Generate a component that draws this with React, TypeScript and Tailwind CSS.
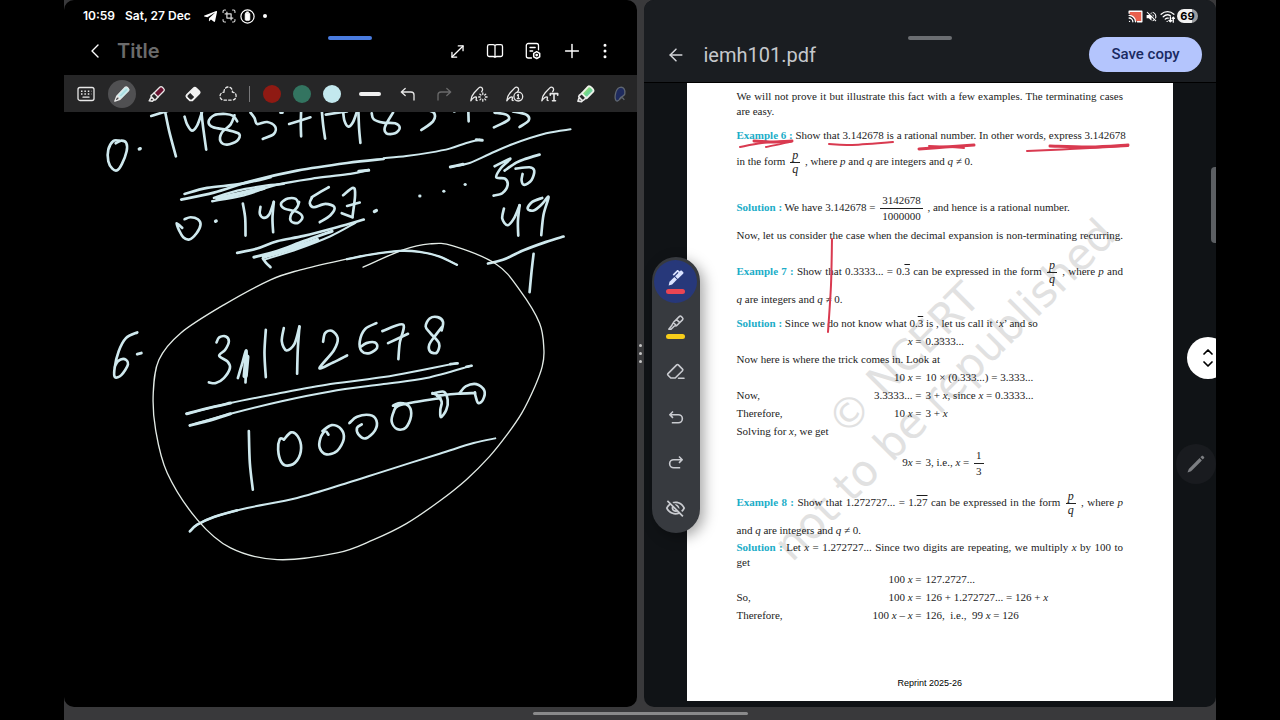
import type { ReactNode } from "react";
import {
  ArrowLeft,
  ChevronDown,
  ChevronLeft,
  ChevronUp,
  EllipsisVertical,
  MoveDiagonal,
  Plus,
} from "lucide-react";
import { FaTelegramPlane } from "react-icons/fa";
import { MdOutlineVisibilityOff, MdVolumeOff } from "react-icons/md";

type Point = [number, number];

interface InkStroke {
  points: string;
  width?: number;
  color?: string;
}

const INK = "#cfe9ee";

// Catmull-Rom spline through the pen samples
function toPath(points: string) {
  const p = points
    .split(" ")
    .map((pair) => pair.split(",").map(Number) as Point);
  let d = `M${p[0][0]} ${p[0][1]}`;
  for (let i = 0; i < p.length - 1; i++) {
    const a = p[i - 1] ?? p[i];
    const b = p[i];
    const c = p[i + 1];
    const e = p[i + 2] ?? c;
    d += `C${b[0] + (c[0] - a[0]) / 6} ${b[1] + (c[1] - a[1]) / 6} ${
      c[0] - (e[0] - b[0]) / 6
    } ${c[1] - (e[1] - b[1]) / 6} ${c[0]} ${c[1]}`;
  }
  return d;
}

const upperLeft: InkStroke[] = [
  { points: "165,98 148,99 133,125 133,160 145,182 160,187 174,168 188,130 187,105 172,98 155,106" },
  { points: "226,123 229,122", width: 10 },
  { points: "262,24 320,6" },
  { points: "303,8 316,70 336,145" },
  { points: "362,26 370,50 384,68 400,52 414,14" },
  { points: "412,8 418,60 427,125" },
  { points: "520,40 508,24 485,18 450,22 434,42 448,58 490,66 526,78 520,98 490,110 470,100 474,74 500,50 512,22" },
  { points: "560,14 572,30 580,48 610,42 634,56 630,78 597,93" },
  { points: "650,14 656,14" },
  { points: "676,48 740,28" },
  { points: "712,8 711,50 712,85" },
  { points: "774,6 778,50 784,92" },
  { points: "786,20 850,10" },
  { points: "838,8 842,38 854,56 868,42 880,10" },
  { points: "884,8 886,60 890,105" },
  { points: "352,275 450,254 560,220 700,188 850,165 960,153", width: 8 },
  { points: "362,258 430,240 530,228 620,208", width: 8 },
  { points: "445,280 540,262 640,230 760,210 860,198 915,186", width: 7 },
  { points: "450,270 520,248 600,234 660,228", width: 7 },
  { points: "460,272 540,254 600,240", width: 12 },
  { points: "885,190 915,187", width: 9 },
  { points: "355,360 338,346 346,368 358,388 376,395 398,376 410,350 402,334 380,328 362,334" },
  { points: "455,340 457,339", width: 10 },
  { points: "537,287 544,330 545,383" },
  { points: "590,297 588,318 600,330 616,320 630,282" },
  { points: "630,282 626,330 628,373" },
  { points: "704,288 696,273 672,272 652,286 662,302 700,312 716,328 702,345 682,340 682,320 700,298 706,282" },
  { points: "744,268 770,252 795,238" },
  { points: "744,270 738,286 750,298 785,288 812,298 800,322 768,343" },
  { points: "838,262 868,240 874,262 866,328" },
  { points: "850,294 888,284" },
  { points: "834,316 866,328" },
  { points: "932,311 938,308", width: 10 },
  { points: "520,435 580,422 640,400 720,384 820,358 900,335" },
  { points: "570,448 640,430 720,400 805,370", width: 9 },
  { points: "600,447 690,420 760,396", width: 12 },
  { points: "600,456 700,424 800,385 875,345", width: 6 },
  { points: "597,452 606,464 620,478" },
];

const upperRight: InkStroke[] = [
  { points: "-24,16 -18,34 10,44 46,46 60,60 46,76 20,76 16,56 40,14" },
  { points: "144,6 164,16 160,40 125,66" },
  { points: "223,11 225,11", width: 7 },
  { points: "266,6 267,40" },
  { points: "345,14 380,20 386,36 343,58" },
  { points: "400,10 440,20 447,38 420,57" },
  { points: "12,151 80,144 150,134 210,122 260,105 300,95", width: 6 },
  { points: "290,95 308,97", width: 9 },
  { points: "212,177 270,165 330,138 400,108 500,76 573,64", width: 6 },
  { points: "212,177 250,169", width: 9 },
  { points: "345,175 392,152 364,180 350,208 376,212 384,232 368,256 342,263" },
  { points: "375,188 410,164 440,152 480,140" },
  { points: "408,182 450,178 464,188 456,216 434,231 426,218 429,198" },
  { points: "120,264 121,264", width: 9 },
  { points: "192,250 193,250", width: 9 },
  { points: "256,230 257,230", width: 9 },
  { points: "373,302 368,332 384,352 404,330 420,292" },
  { points: "420,292 415,340 416,383" },
  { points: "488,270 458,282 444,302 462,308 486,290 507,267 492,320 485,382" },
  { points: "325,467 370,456 430,428 500,402 552,386", width: 8 },
  { points: "462,438 456,490 450,553" },
];

const lower: InkStroke[] = [
  { points: "220,188 186,205 164,245 152,295 153,322 172,316 192,284 182,268 162,274 152,292" },
  { points: "220,253 232,250", width: 9 },
  { points: "458,218 466,203 486,200 495,215 484,240 466,258 492,276 498,296 480,325 456,340 435,338" },
  { points: "522,325 534,285 548,243 545,338" },
  { points: "549,262 544,318", width: 16 },
  { points: "606,180 602,250 606,322" },
  { points: "660,175 654,215 668,242 692,222 707,170" },
  { points: "707,170 702,240 700,312" },
  { points: "778,216 784,190 804,183 822,205 810,242 767,295 808,278 850,257" },
  { points: "938,160 904,178 888,215 894,244 918,250 940,234 934,218 908,220 890,232" },
  { points: "956,184 1018,164 1008,220 1004,268" },
  { points: "973,220 1033,192" },
  { points: "1134,182 1138,156 1122,142 1098,146 1086,170 1100,190 1126,220 1120,248 1100,246 1097,224 1116,196 1136,170" },
  { points: "368,432 500,400 640,372 800,343 960,322 1068,302 1178,280", width: 6 },
  { points: "368,432 430,416 500,400", width: 9 },
  { points: "378,467 500,432 650,395 800,365 960,343 1088,325 1223,288", width: 6 },
  { points: "378,467 430,454 500,432", width: 9 },
  { points: "1160,283 1182,281", width: 8 },
  { points: "1208,291 1224,288", width: 8 },
  { points: "555,484 558,580 567,660" },
  { points: "658,508 648,508 643,540 652,576 672,588 700,572 712,535 702,500 682,488 660,510" },
  { points: "794,495 784,484 770,505 768,535 788,554 820,544 840,508 832,478 804,466 776,484" },
  { points: "857,460 880,441 918,436 938,452 934,482 906,506 884,494 880,474 894,464" },
  { points: "1006,404 988,408 1010,400 1036,410 1042,440 1026,474 1000,478 984,456 990,426 1004,408 1060,396 1130,385" },
  { points: "1106,372 1140,366 1152,390 1148,420 1132,442 1130,420 1134,396 1120,376 1106,370" },
  { points: "1120,378 1180,372 1234,370" },
  { points: "1188,370 1206,350 1238,343 1262,362 1258,390 1244,400 1236,380 1234,368" },
  { points: "378,785 400,765 450,742 550,715 700,685 850,640 960,605 1128,552 1230,520 1295,506", width: 6 },
  { points: "378,785 400,765 450,742 520,722", width: 8 },
];

const loop: InkStroke[] = [
  {
    points:
      "1180,459 1128,434 1068,420 1008,417 920,428 828,446 710,474 620,504 480,579 350,664 285,744 268,844 275,954 310,1084 400,1224 500,1309 640,1344 820,1324 930,1284 1028,1236 1128,1168 1208,1104 1278,1034 1328,972 1374,905 1414,824 1436,764 1441,714 1428,634 1368,534 1298,457 1168,402 1098,396 1018,414 898,466",
    width: 4,
    color: "#e3ebe6",
  },
  { points: "1180,459 1128,434 1068,420 1008,417 920,428 850,442", width: 7 },
];

function Strokes({ strokes }: { strokes: InkStroke[] }) {
  return (
    <>
      {strokes.map((s) => (
        <path
          key={s.points}
          d={toPath(s.points)}
          stroke={s.color ?? INK}
          strokeWidth={s.width ?? 8}
        />
      ))}
    </>
  );
}

function Icon({
  size = 20,
  children,
  className = "",
}: {
  size?: number;
  children: ReactNode;
  className?: string;
}) {
  return (
    <svg
      width={size}
      height={size}
      viewBox="0 0 20 20"
      fill="none"
      stroke="currentColor"
      strokeWidth={1.3}
      strokeLinecap="round"
      strokeLinejoin="round"
      className={className}
      aria-hidden="true"
    >
      {children}
    </svg>
  );
}

function ToolButton({
  label,
  children,
  active = false,
}: {
  label: string;
  children: ReactNode;
  active?: boolean;
}) {
  return (
    <button
      type="button"
      aria-label={label}
      className={
        active
          ? "flex size-7 shrink-0 items-center justify-center rounded-full bg-[#505052]"
          : "flex size-7 shrink-0 items-center justify-center rounded-full"
      }
    >
      {children}
    </button>
  );
}

// The pen outline shared by the three handwriting assistant tools
function AssistPen() {
  return (
    <path d="M1.800 16.800C2 13.500 3.200 11 5.200 8.800L9.800 3.900C11.300 2.400 13.600 3.300 13.600 5.300c0 .9-.3 1.600-.9 2.400M1.800 16.800C3.500 14.500 5 13 6.700 12.900c1.300 0 .6 1.700.4 2.600-.1.700.3 1 1 1" />
  );
}

const penColors = [
  { name: "Red", className: "size-[18px] rounded-full bg-[#8f1a13]" },
  { name: "Green", className: "size-[18px] rounded-full bg-[#337460]" },
  { name: "Light blue", className: "size-[18px] rounded-full bg-[#c3e8ee]" },
];

function NotesHeader() {
  return (
    <header className="flex h-[75px] flex-col">
      <div className="flex h-8 items-center pl-[19px]">
        <span className="text-[12px] font-semibold">10:59</span>
        <span className="ml-[10px] text-[12px] font-semibold">Sat, 27 Dec</span>
        <div className="ml-3 flex items-center gap-1">
          <FaTelegramPlane size={15} />
          <Icon size={14} className="text-[#d8d8d8]">
            <path strokeWidth={1.6} d="M1.500 5V3.500a2 2 0 0 1 2-2H5M15 1.500h1.500a2 2 0 0 1 2 2V5M18.500 15v1.500a2 2 0 0 1-2 2H15M5 18.500H3.500a2 2 0 0 1-2-2V15" />
            <path strokeWidth={1.8} d="M7 4.500V13h8.500M4.500 7H13v8.500" />
          </Icon>
          <Icon size={15}>
            <circle cx="10" cy="10" r="8.800" strokeWidth={1.6} />
            <rect x="7" y="5.500" width="6" height="9.500" rx="1" fill="currentColor" />
            <path d="M9 4.300h2" strokeWidth={1.8} />
          </Icon>
          <span className="ml-1 size-1 rounded-full bg-white" />
        </div>
      </div>
      <span className="mt-1 h-1 w-11 self-center rounded-full bg-[#4a7ce0]" />
      <div className="-mt-[3px] flex items-center pr-[27px] pl-[19px]">
        <button type="button" aria-label="Back">
          <ChevronLeft size={24} strokeWidth={1.4} />
        </button>
        <input
          type="text"
          aria-label="Title"
          placeholder="Title"
          className="ml-[10px] h-7 w-0 flex-1 bg-transparent text-xl font-semibold outline-none placeholder:text-[#6b6b6b]"
        />
        <div className="flex shrink-0 items-center gap-[18px]">
          <button type="button" aria-label="Full screen">
            <MoveDiagonal size={19} strokeWidth={1.6} />
          </button>
          <button type="button" aria-label="Reading mode">
            <Icon>
              <path d="M10 4.500C9.400 3.900 8.700 3.700 8 3.700H4.300A1.800 1.800 0 0 0 2.500 5.500v8.200a1.800 1.800 0 0 0 1.800 1.800h3.900c.7 0 1.300.2 1.800.8.500-.6 1.100-.8 1.800-.8h3.900a1.800 1.800 0 0 0 1.800-1.800V5.500a1.800 1.800 0 0 0-1.800-1.800H12c-.7 0-1.400.2-2 .8ZM10 4.500v11.800" />
            </Icon>
          </button>
          <button type="button" aria-label="Page settings">
            <Icon>
              <path d="M8.500 17H5.300A2 2 0 0 1 3.300 15V4.500a2 2 0 0 1 2-2h8.200a2 2 0 0 1 2 2v4.300M7 6.500h5.200M7 10h2.700" />
              <path strokeWidth={1.5} d="m13.700 10.700 3 1.700v3.400l-3 1.700-3-1.700v-3.400z" />
              <circle cx="13.700" cy="14.100" r=".7" fill="currentColor" />
            </Icon>
          </button>
          <button type="button" aria-label="Add">
            <Plus size={22} strokeWidth={1.6} />
          </button>
          <button type="button" aria-label="More options" className="flex w-[9px] justify-center">
            <EllipsisVertical size={20} strokeWidth={1.6} className="shrink-0" />
          </button>
        </div>
      </div>
    </header>
  );
}

function NotesToolbar() {
  return (
    <div className="flex h-[37px] items-center overflow-hidden bg-[#262627] pr-[1px] pl-2 text-[#e8e8e8]">
      <div className="flex w-[170px] shrink-0 justify-between">
        <ToolButton label="Keyboard">
          <Icon>
            <rect x="2" y="3.500" width="16" height="13" rx="2" />
            <path strokeWidth={1.5} strokeDasharray="1.500 1.900" strokeLinecap="butt" d="M5 7.200h10.500M5 10h10.500" />
            <path d="M7 13.200h6" />
          </Icon>
        </ToolButton>
        <ToolButton label="Pen" active>
          <Icon>
            <path d="M2.800 17.200 4.700 12.300l8.500-9c1.300-1.300 4.700 1.800 3.500 3.300l-8.700 8.700z" fill="#e8e8e8" stroke="#e8e8e8" />
            <path d="m6.700 11.500 6.900-7.200c.9-.7 2.900 1.200 2.300 2.100l-7 7.100z" fill="#a9dcdf" stroke="#c5ecee" />
            <path d="m4.700 15.300 1.300-1.200" stroke="#4b4b4d" />
          </Icon>
        </ToolButton>
        <ToolButton label="Highlighter">
          <Icon>
            <path d="m7 9 5.700-5.700c.8-.8 1.900-.8 2.700 0l1.300 1.300c.8.8.8 1.900 0 2.700L11 13z" fill="#6a1230" />
            <path strokeWidth={1.5} d="M7 9 4.500 11.200c-.6.500-.6 1.200-.1 1.700l2.700 2.700c.5.500 1.200.5 1.700-.1L11 13M4.400 13l-2.200 3.800 3.200.4 1.700-1.600" />
          </Icon>
        </ToolButton>
        <ToolButton label="Eraser">
          <Icon>
            <path d="m3.700 10.800 6.700-6.700c.9-.9 2-.9 2.900 0l2.900 2.900c.9.900.9 2 0 2.900L9.500 16.500H6.800l-3.100-3c-.8-.8-.8-1.900 0-2.700Z" fill="#f2f2f2" stroke="#f2f2f2" />
            <path d="m4.600 11.600 2.600-2.600 4 4-2.600 2.500H7.300l-2.600-2.500c-.4-.4-.4-1 0-1.400Z" fill="#262627" stroke="none" />
          </Icon>
        </ToolButton>
        <ToolButton label="Lasso">
          <Icon>
            <path strokeDasharray="2.500 2.100" d="M6 8.200C5.800 5 8 3 10.300 3s4.300 2 4.100 5.200c2.300.3 3.800 1.700 3.700 3.900-.1 2.500-1.800 4-4.600 4H6.300c-2.700 0-4.300-1.500-4.300-3.900 0-2.300 1.600-3.800 4-4Z" />
          </Icon>
        </ToolButton>
      </div>
      <span className="ml-[7px] h-4 w-px shrink-0 bg-[#777779]" />
      <div className="ml-[13px] flex shrink-0 gap-3">
        {penColors.map((c) => (
          <button key={c.name} type="button" aria-label={c.name} className={c.className} />
        ))}
      </div>
      <button type="button" aria-label="Pen thickness" className="ml-[18px] h-1 w-[22px] shrink-0 rounded-full bg-[#f0f0f0]" />
      <div className="ml-[13px] flex flex-1 items-center justify-between">
        <ToolButton label="Undo">
          <Icon>
            <path d="M7.200 4.500 3.300 8 7.200 11.500M3.500 8H13a3 3 0 0 1 3 3V16" />
          </Icon>
        </ToolButton>
        <ToolButton label="Redo">
          <Icon className="text-[#6a6a6b]">
            <path d="m12.800 4.500 3.900 3.500-3.900 3.500M16.500 8H7a3 3 0 0 0-3 3V16" />
          </Icon>
        </ToolButton>
        <ToolButton label="Tidy handwriting">
          <Icon>
            <AssistPen />
            <path d="M13.800 8.800v1.700M13.800 15.500v1.700M9.700 13h1.500M16.400 13h1.700M10.900 10.200l1 .9M15.700 14.900l1 1M16.700 10.200l-1 .9M11.900 14.900l-1 1" />
          </Icon>
        </ToolButton>
        <ToolButton label="Timer pen">
          <Icon>
            <AssistPen />
            <circle cx="13.300" cy="12.600" r="4.400" fill="#262627" />
            <path d="M12.500 11.200 13.300 10.500v4M12.300 14.600h2" />
          </Icon>
        </ToolButton>
        <ToolButton label="Convert to text">
          <Icon>
            <AssistPen />
            <path strokeWidth={1.6} d="M10.300 11.300V9.600h7.400v1.700M14 9.600v7.200M12.500 16.800h3" />
          </Icon>
        </ToolButton>
        <ToolButton label="Colour fill">
          <Icon>
            <defs>
              <linearGradient id="marker" x1="0" y1="0" x2="1" y2="1">
                <stop offset="0" stopColor="#e9e36a" />
                <stop offset=".5" stopColor="#6bd58a" />
                <stop offset="1" stopColor="#8fc4f2" />
              </linearGradient>
            </defs>
            <path d="m5.800 9.300 6.300-6.700c1.600-1.400 6.700 3.300 5.100 5.100l-6.600 6.600z" fill="url(#marker)" stroke="#eef3ea" strokeWidth={1.800} />
            <path strokeWidth={1.7} d="m5.800 9.300-2.600 2.200c-.6.600-.5 1.300 0 1.900l2.600 2.600c.6.600 1.300.6 1.900 0l2.900-2.700M3.200 13.500l-1.200 3.700 3.500.4 1-1" />
          </Icon>
        </ToolButton>
        <ToolButton label="Text style">
          <Icon className="text-[#5f6670]">
            <path d="M5 16.500c-1.800-2.300-.7-11.500 3.500-13 4.500-1.300 6 3 5.300 6.500-.5 2.500-3.500 1.500-5.500 5.500-.8 1.400-2.200 2-3.300 1Z" fill="#1f2b5e" />
            <path d="M8.500 15.500c1.500-2.500 3-2.500 4.500 0" />
          </Icon>
        </ToolButton>
      </div>
    </div>
  );
}

function NotesPanel() {
  return (
    <section
      aria-label="Notes"
      className="flex min-w-0 flex-1 flex-col overflow-hidden rounded-[10px] bg-black font-['Inter',sans-serif] text-white"
    >
      <NotesHeader />
      <NotesToolbar />
      <div className="flex-1">
        <svg
          viewBox="0 0 1719 1785"
          preserveAspectRatio="xMinYMin meet"
          fill="none"
          strokeLinecap="round"
          strokeLinejoin="round"
          className="w-full"
          role="img"
          aria-label="Handwritten working for 3.142678"
        >
          <g transform="translate(0 -12)">
            <Strokes strokes={upperLeft} />
          </g>
          <g transform="translate(948 -12)">
            <Strokes strokes={upperRight} />
          </g>
          <g transform="translate(0 474)">
            <Strokes strokes={lower} />
          </g>
          <Strokes strokes={loop} />
        </svg>
      </div>
    </section>
  );
}

function Frac({
  top,
  bottom,
  italic = false,
}: {
  top: string;
  bottom: string;
  italic?: boolean;
}) {
  return (
    <span
      className={
        italic
          ? "mx-[2px] inline-flex flex-col items-center align-middle text-[12px] leading-[13px] italic"
          : "mx-[2px] inline-flex flex-col items-center align-middle leading-[15px]"
      }
    >
      <span className="border-b border-[#222] px-[2px]">{top}</span>
      <span className="px-[2px]">{bottom}</span>
    </span>
  );
}

function Lead({ children }: { children: ReactNode }) {
  return <b className="text-[#1badc8]">{children}</b>;
}

function Equation({
  label,
  left,
  children,
  tall = false,
}: {
  label?: string;
  left: ReactNode;
  children: ReactNode;
  tall?: boolean;
}) {
  return (
    <div
      className={
        tall
          ? "mt-1 grid grid-cols-[60px_125px_1fr] leading-9"
          : "grid grid-cols-[60px_125px_1fr] leading-[18px]"
      }
    >
      <span>{label}</span>
      <span className="text-right">{left} =</span>
      <span className="pl-1">{children}</span>
    </div>
  );
}

const redInk: InkStroke[] = [
  { points: "740,147 762,143 792,141 766,147", width: 2 },
  { points: "754,141 775,142 792,141", width: 3 },
  { points: "829,144 850,145 893,142", width: 2 },
  { points: "919,149 945,147 974,145", width: 3 },
  { points: "929,146 950,147 964,148", width: 2 },
  { points: "1027,151 1070,149 1128,146", width: 2 },
  { points: "1050,146 1090,147 1128,145", width: 3 },
  { points: "832,239 831,285 828,332", width: 2 },
];

const x = <i>x</i>;

function PdfPage() {
  return (
    <article className="relative mx-[43px] bg-white px-[50px] pt-[6px] pb-[9px] font-['Liberation_Serif',serif] text-[11px] whitespace-nowrap text-[#1c1c1c]">
      <svg
        viewBox="687 83 487 618"
        className="pointer-events-none absolute top-0 left-0 h-[618px] w-[487px] font-['DejaVu_Sans',sans-serif]"
        aria-hidden="true"
      >
        <g fill="#e1e1e1">
          <text transform="translate(845 438) rotate(-45)" className="text-[42px]">
            © NCERT
          </text>
          <text transform="translate(792 563) rotate(-45)" className="text-[43px]">
            not to be republished
          </text>
        </g>
      </svg>

      <div className="relative">
        <p className="leading-[15px] [text-align-last:justify]">
          We will not prove it but illustrate this fact with a few examples. The terminating cases
        </p>
        <p className="leading-[15px]">are easy.</p>

        <p className="mt-2 leading-4 [text-align-last:justify]">
          <Lead>Example 6 :</Lead> Show that 3.142678 is a rational number. In other words, express 3.142678
        </p>
        <p className="leading-9">
          in the form <Frac top="p" bottom="q" italic /> , where <i>p</i> and <i>q</i> are integers and <i>q</i> ≠ 0.
        </p>

        <p className="mt-[10px] leading-9">
          <Lead>Solution :</Lead> We have 3.142678 = <Frac top="3142678" bottom="1000000" /> , and hence is a rational number.
        </p>
        <p className="leading-5 [text-align-last:justify]">
          Now, let us consider the case when the decimal expansion is non-terminating recurring.
        </p>

        <p className="mt-2 leading-9 [text-align-last:justify]">
          <Lead>Example 7 :</Lead> Show that 0.3333... = 0.<span className="overline">3</span> can be expressed in the form{" "}
          <Frac top="p" bottom="q" italic /> , where <i>p</i> and
        </p>
        <p className="leading-5">
          <i>q</i> are integers and <i>q</i> ≠ 0.
        </p>

        <p className="mt-[5px] leading-[18px]">
          <Lead>Solution :</Lead> Since we do not know what 0.<span className="overline">3</span> is , let us call it ‘{x}’ and so
        </p>
        <Equation left={x}>0.3333...</Equation>
        <p className="leading-[18px]">Now here is where the trick comes in. Look at</p>
        <Equation left={<>10 {x}</>}>10 × (0.333...) = 3.333...</Equation>
        <Equation label="Now," left="3.3333...">
          3 + {x}, since {x} = 0.3333...
        </Equation>
        <Equation label="Therefore," left={<>10 {x}</>}>
          3 + {x}
        </Equation>
        <p className="leading-[18px]">Solving for {x}, we get</p>
        <Equation left={<>9{x}</>} tall>
          3, i.e., {x} = <Frac top="1" bottom="3" />
        </Equation>

        <p className="mt-1 leading-9 [text-align-last:justify]">
          <Lead>Example 8 :</Lead> Show that 1.272727... = 1.<span className="overline">27</span> can be expressed in the form{" "}
          <Frac top="p" bottom="q" italic /> , where <i>p</i>
        </p>
        <p className="leading-5">
          and <i>q</i> are integers and <i>q</i> ≠ 0.
        </p>

        <p className="leading-[15px] [text-align-last:justify]">
          <Lead>Solution :</Lead> Let {x} = 1.272727... Since two digits are repeating, we multiply {x} by 100 to
        </p>
        <p className="leading-[15px]">get</p>
        <Equation left={<>100 {x}</>}>127.2727...</Equation>
        <Equation label="So," left={<>100 {x}</>}>
          126 + 1.272727... = 126 + {x}
        </Equation>
        <Equation label="Therefore," left={<>100 {x} – {x}</>}>
          126, &nbsp;i.e., &nbsp;99 {x} = 126
        </Equation>

        <p className="mt-[50px] text-center font-['Liberation_Sans',sans-serif] text-[9px] leading-[18px] text-black">
          Reprint 2025-26
        </p>
      </div>

      <svg
        viewBox="687 83 487 618"
        fill="none"
        strokeLinecap="round"
        strokeLinejoin="round"
        className="pointer-events-none absolute top-0 left-0 h-[618px] w-[487px]"
        aria-hidden="true"
      >
        {redInk.map((s) => (
          <path key={s.points} d={toPath(s.points)} stroke="#d93a50" strokeWidth={s.width} />
        ))}
      </svg>
    </article>
  );
}

function MarkupToolbar() {
  return (
    <div
      role="toolbar"
      aria-label="Markup"
      className="absolute top-[257px] left-2 flex h-[276px] w-12 flex-col rounded-full bg-[#373a3f] py-[2px] text-[#c9cbd0] shadow-[4px_4px_14px_rgba(0,0,0,0.35)]"
    >
      <button type="button" aria-label="Pen" className="flex flex-1 items-center justify-center">
        <span className="flex size-[43px] shrink-0 flex-col items-center justify-center gap-[2px] rounded-full bg-[#27387a] text-[#dbe3ff]">
          <Icon size={18}>
            <path d="M1.800 18.200l1-3.900 5.400-5.400 2.900 2.900-5.400 5.400z" fill="currentColor" stroke="none" />
            <path d="m9 8 3.800-3.800-1-1L7.600 7.400 6.300 6.100l4.500-4.500c.7-.6 1.300-.6 2 0l1.300 1.200.6-.6c.6-.6 1.300-.6 2 0l1.200 1.200c.6.7.6 1.300 0 2L11.900 11z" fill="currentColor" stroke="none" />
          </Icon>
          <span className="h-[5px] w-[19px] rounded-full bg-[#ea4553]" />
        </span>
      </button>
      <button type="button" aria-label="Highlighter" className="flex flex-1 flex-col items-center justify-center gap-[2px]">
        <Icon size={18}>
          <path strokeWidth={1.7} d="m7 9.500 6.600-6.600c.8-.8 1.600-.8 2.400 0l1.200 1.200c.8.8.8 1.600 0 2.400L10.600 13.100 8.200 13.300 4.500 17H2l3.500-4.500zM10.500 6l3.600 3.600M7 9.500l3.600 3.600" />
        </Icon>
        <span className="h-[5px] w-[19px] rounded-full bg-[#f6cd1a]" />
      </button>
      <button type="button" aria-label="Eraser" className="flex flex-1 items-center justify-center">
        <Icon>
          <path strokeWidth={1.6} strokeLinejoin="miter" d="M4.800 16 2 13.200c-.5-.5-.5-1.100 0-1.600l8.700-8.700c.5-.5 1.100-.5 1.600 0l4.200 4.200c.5.500.5 1.100 0 1.600L9.200 16zM12.500 16.200h5.500" />
        </Icon>
      </button>
      <button type="button" aria-label="Undo" className="flex flex-1 items-center justify-center">
        <Icon>
          <path strokeWidth={1.6} strokeLinecap="butt" d="M7 3.500 3.800 6.700 7 9.900M4 6.700h8.300a4 4 0 0 1 0 8.100H5.800" />
        </Icon>
      </button>
      <button type="button" aria-label="Redo" className="flex flex-1 items-center justify-center">
        <Icon>
          <path strokeWidth={1.6} strokeLinecap="butt" d="m13 3.500 3.200 3.200L13 9.900M16 6.700H7.700a4 4 0 0 0 0 8.100h6.500" />
        </Icon>
      </button>
      <button type="button" aria-label="Hide markup" className="flex flex-1 items-center justify-center">
        <MdOutlineVisibilityOff size={21} />
      </button>
    </div>
  );
}

function PdfPanel() {
  return (
    <section
      aria-label="PDF viewer"
      className="relative flex min-w-0 flex-1 flex-col overflow-hidden rounded-[10px] bg-[#101316] font-['Roboto',sans-serif]"
    >
      <header className="flex h-[83px] flex-col border-b border-black bg-[#1a1d21]">
        <div className="flex h-8 items-center justify-end gap-[2px] pr-[18px] text-white">
          <Icon size={15}>
            <path d="M1.500 6V3.500h17v13h-7" fill="#e8604c" stroke="none" />
            <path strokeWidth={1.7} d="M1.500 5.500V3h17v14h-6M1.500 8.500a8.500 8.500 0 0 1 8.500 8.500M1.500 12a5 5 0 0 1 5 5M2 16.500h.1" />
          </Icon>
          <MdVolumeOff size={13} />
          <Icon size={15}>
            <path strokeWidth={1.7} d="M1.500 7c5-4.500 12-4.500 17 0M4.300 10.300c3.200-3 7-3 9.400-1.500M7 13.500c1.200-1.200 2.600-1.500 4-1.200M9.500 16.500h.1M13.800 10.500v6.500M12 15.300l1.800 1.900 1.800-1.900M17.700 17.500V11M16.200 12.500l1.500-1.600 1.500 1.600" />
          </Icon>
          <span className="flex h-[14px] w-[21px] items-center justify-center rounded-full bg-linear-to-r from-[#f2f2f2] from-70% to-[#9a9c9f] to-70% font-['Inter',sans-serif] text-[11px] font-bold text-black">
            69
          </span>
        </div>
        <span className="mt-1 h-1 w-11 self-center rounded-full bg-[#6b6e72]" />
        <div className="-mt-[3px] flex items-center pr-[14px] pl-[22px]">
          <button type="button" aria-label="Back" className="text-[#d3d5d9]">
            <ArrowLeft size={20} strokeWidth={1.8} />
          </button>
          <h1 className="ml-[18px] flex-1 text-xl text-[#c6c8cc]">iemh101.pdf</h1>
          <button type="button" className="h-[35px] w-[113px] rounded-full bg-[#b4c5fd] text-[15px] font-medium text-[#1a2a62]">
            Save copy
          </button>
        </div>
      </header>
      <div className="flex-1 pb-[6px]">
        <PdfPage />
      </div>

      <MarkupToolbar />
      <span className="absolute top-[167px] right-0 h-[76px] w-[5px] rounded-l-[4px] bg-[#5c5f63]" />
      <button
        type="button"
        aria-label="Scroll pages"
        className="absolute top-[337px] -right-[13px] flex size-[42px] flex-col items-center justify-center rounded-full bg-white text-black"
      >
        <ChevronUp size={16} strokeWidth={2.6} className="-mb-1" />
        <ChevronDown size={16} strokeWidth={2.6} />
      </button>
      <button
        type="button"
        aria-label="Edit"
        className="absolute top-[444px] right-0 flex size-10 items-center justify-center rounded-full bg-[#191b1f] text-[#7c7e82]"
      >
        <Icon>
          <path d="m1.500 18.500 1.300-3.600L13.600 4.100l2.300 2.300L5.100 17.200z" fill="currentColor" stroke="none" />
          <path d="m14.400 3.300 1.300-1.300c.5-.5 1-.5 1.400 0l.9.900c.5.500.5 1 0 1.400l-1.300 1.300z" fill="currentColor" stroke="none" />
        </Icon>
      </button>
    </section>
  );
}

export default function App() {
  return (
    <div className="min-h-screen bg-black px-16">
      <main className="flex min-h-screen flex-col bg-[#39393b]">
        <div className="flex flex-1">
          <NotesPanel />
          <div className="flex w-[7px] shrink-0 flex-col items-center justify-center gap-[5px]">
            <span className="size-[3px] rounded-full bg-[#c4c4c4]" />
            <span className="size-[3px] rounded-full bg-[#c4c4c4]" />
            <span className="size-[3px] rounded-full bg-[#c4c4c4]" />
          </div>
          <PdfPanel />
        </div>
        <div className="flex h-[13px] items-center justify-center">
          <span className="h-[3px] w-[215px] rounded-full bg-[#8a8a8b]" />
        </div>
      </main>
    </div>
  );
}
